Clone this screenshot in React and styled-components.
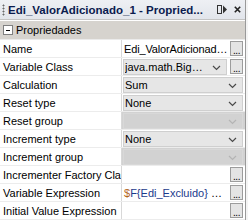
import React from 'react';
import styled, { createGlobalStyle } from 'styled-components';

const GlobalStyle = createGlobalStyle`
  html, body {
    margin: 0;
    padding: 0;
    background: #f0f0f0;
  }
  body {
    font-family: "Liberation Sans", Arial, sans-serif;
    font-size: 11px;
  }
`;

const Frame = styled.div`
  width: 248px;
  height: 220px;
  display: flex;
  background: #f4f4f4;
  overflow: hidden;
`;

const Panel = styled.div`
  width: 245px;
  border-right: 1px solid #9a9a9a;
  display: flex;
  flex-direction: column;
  background: #ffffff;
`;

const TitleBar = styled.div`
  height: 19px;
  display: flex;
  align-items: center;
  background: linear-gradient(#eef0f4, #e2e5eb);
  border-bottom: 1px solid #c4c4c4;
  padding: 0 4px 0 2px;
`;

const Grip = styled.div`
  width: 3px;
  height: 12px;
  margin-right: 3px;
  background-image: radial-gradient(circle, #6a6a6a 0.9px, transparent 1.1px);
  background-size: 3px 3px;
`;

const Title = styled.div`
  flex: 1;
  font-weight: bold;
  font-size: 11.5px;
  color: #0b1b4e;
  white-space: nowrap;
  overflow: hidden;
`;

const TitleIcons = styled.div`
  display: flex;
  align-items: center;
  gap: 7px;
  color: #333;
`;

const Category = styled.div`
  height: 18px;
  margin-top: 1px;
  display: flex;
  align-items: center;
  background: #d6d3ce;
  border-bottom: 1px solid #ebebeb;
  padding-left: 3px;
  gap: 3px;
  color: #000;
`;

const MinusBox = styled.div`
  width: 8px;
  height: 8px;
  border: 1px solid #808080;
  background: #fff;
  position: relative;
  &::after {
    content: '';
    position: absolute;
    left: 2px;
    right: 2px;
    top: 4px;
    height: 1px;
    background: #000;
  }
`;

const Row = styled.div`
  height: 18px;
  display: grid;
  grid-template-columns: 122px 1fr;
  border-bottom: 1px solid #ececec;
  box-sizing: border-box;
`;

const Label = styled.div`
  padding-left: 3px;
  display: flex;
  align-items: center;
  white-space: nowrap;
  overflow: hidden;
  border-right: 1px solid #d8d8d8;
  color: #000;
`;

const Value = styled.div`
  display: flex;
  align-items: center;
  gap: 3px;
  padding: 0 2px 0 1px;
  min-width: 0;
  background: ${p => (p.$disabled ? '#d2d2d2' : '#fff')};
`;

const Text = styled.div`
  flex: 1;
  min-width: 0;
  white-space: nowrap;
  overflow: hidden;
  color: #000;
  padding-left: 1px;
  letter-spacing: ${p => (p.$tight ? '-0.15px' : '0')};
`;

const Combo = styled.div`
  flex: 1;
  min-width: 0;
  height: 16px;
  box-sizing: border-box;
  display: flex;
  align-items: center;
  background: ${p => (p.$disabled ? '#d2d2d2' : '#e6e6e6')};
  border: 1px solid ${p => (p.$disabled ? '#d8d8d8' : '#cfcfcf')};
  padding-left: 1px;
  color: #000;
`;

const ComboText = styled.div`
  flex: 1;
  white-space: nowrap;
  overflow: hidden;
`;

const Chevron = styled.svg`
  width: 9px;
  height: 6px;
  margin: 3px 5px 0 4px;
  flex: none;
`;

const DotsButton = styled.div`
  width: 13px;
  height: 15px;
  box-sizing: border-box;
  flex: none;
  border: 1px solid #9c9c9c;
  background: #e4e4e4;
  font-size: 10px;
  line-height: 18px;
  text-align: center;
  color: #000;
  letter-spacing: -0.5px;
`;

const Dollar = styled.span`
  color: #b5651d;
`;

const Expr = styled.span`
  color: #1c3a8c;
`;

const Down = ({ disabled }) => (
  <Chevron viewBox="0 0 9 6">
    <path
      d="M1 1 L4.5 4.5 L8 1"
      fill="none"
      stroke={disabled ? '#b4b4b4' : '#4a4a4a'}
      strokeWidth="1.2"
    />
  </Chevron>
);

const ComboField = ({ text, disabled }) => (
  <Combo $disabled={disabled}>
    <ComboText>{text}</ComboText>
    <Down disabled={disabled} />
  </Combo>
);

const properties = [
  { label: 'Name', kind: 'text', value: 'Edi_ValorAdicionad…', dots: true, tight: true },
  { label: 'Variable Class', kind: 'combo', value: 'java.math.Big…', dots: true },
  { label: 'Calculation', kind: 'combo', value: 'Sum' },
  { label: 'Reset type', kind: 'combo', value: 'None' },
  { label: 'Reset group', kind: 'combo', value: '', disabled: true },
  { label: 'Increment type', kind: 'combo', value: 'None' },
  { label: 'Increment group', kind: 'combo', value: '', disabled: true },
  { label: 'Incrementer Factory Class', kind: 'text', value: '', dots: true },
  { label: 'Variable Expression', kind: 'expr', dots: true },
  { label: 'Initial Value Expression', kind: 'text', value: '', dots: true },
];

export default function App() {
  return (
    <>
      <GlobalStyle />
      <Frame>
        <Panel>
          <TitleBar>
            <Grip />
            <Title>Edi_ValorAdicionado_1 - Propried...</Title>
            <TitleIcons>
              <svg width="10" height="9" viewBox="0 0 10 9">
                <rect x="0.5" y="0.5" width="4" height="8" fill="none" stroke="#333" />
                <path d="M6 0.5 L10 4.5 L6 8.5 Z" fill="#333" />
              </svg>
              <svg width="7" height="7" viewBox="0 0 7 7">
                <path d="M0.8 0.8 L6.2 6.2 M6.2 0.8 L0.8 6.2" stroke="#222" strokeWidth="1.6" />
              </svg>
            </TitleIcons>
          </TitleBar>
          <Category>
            <MinusBox />
            Propriedades
          </Category>
          {properties.map(p => (
            <Row key={p.label}>
              <Label>{p.label}</Label>
              <Value $disabled={p.disabled}>
                {p.kind === 'combo' && <ComboField text={p.value} disabled={p.disabled} />}
                {p.kind === 'text' && <Text $tight={p.tight}>{p.value}</Text>}
                {p.kind === 'expr' && (
                  <Text>
                    <Dollar>$</Dollar>
                    <Expr>F{'{'}Edi_Excluido{'}'}</Expr> …
                  </Text>
                )}
                {p.dots && <DotsButton>...</DotsButton>}
              </Value>
            </Row>
          ))}
        </Panel>
      </Frame>
    </>
  );
}
